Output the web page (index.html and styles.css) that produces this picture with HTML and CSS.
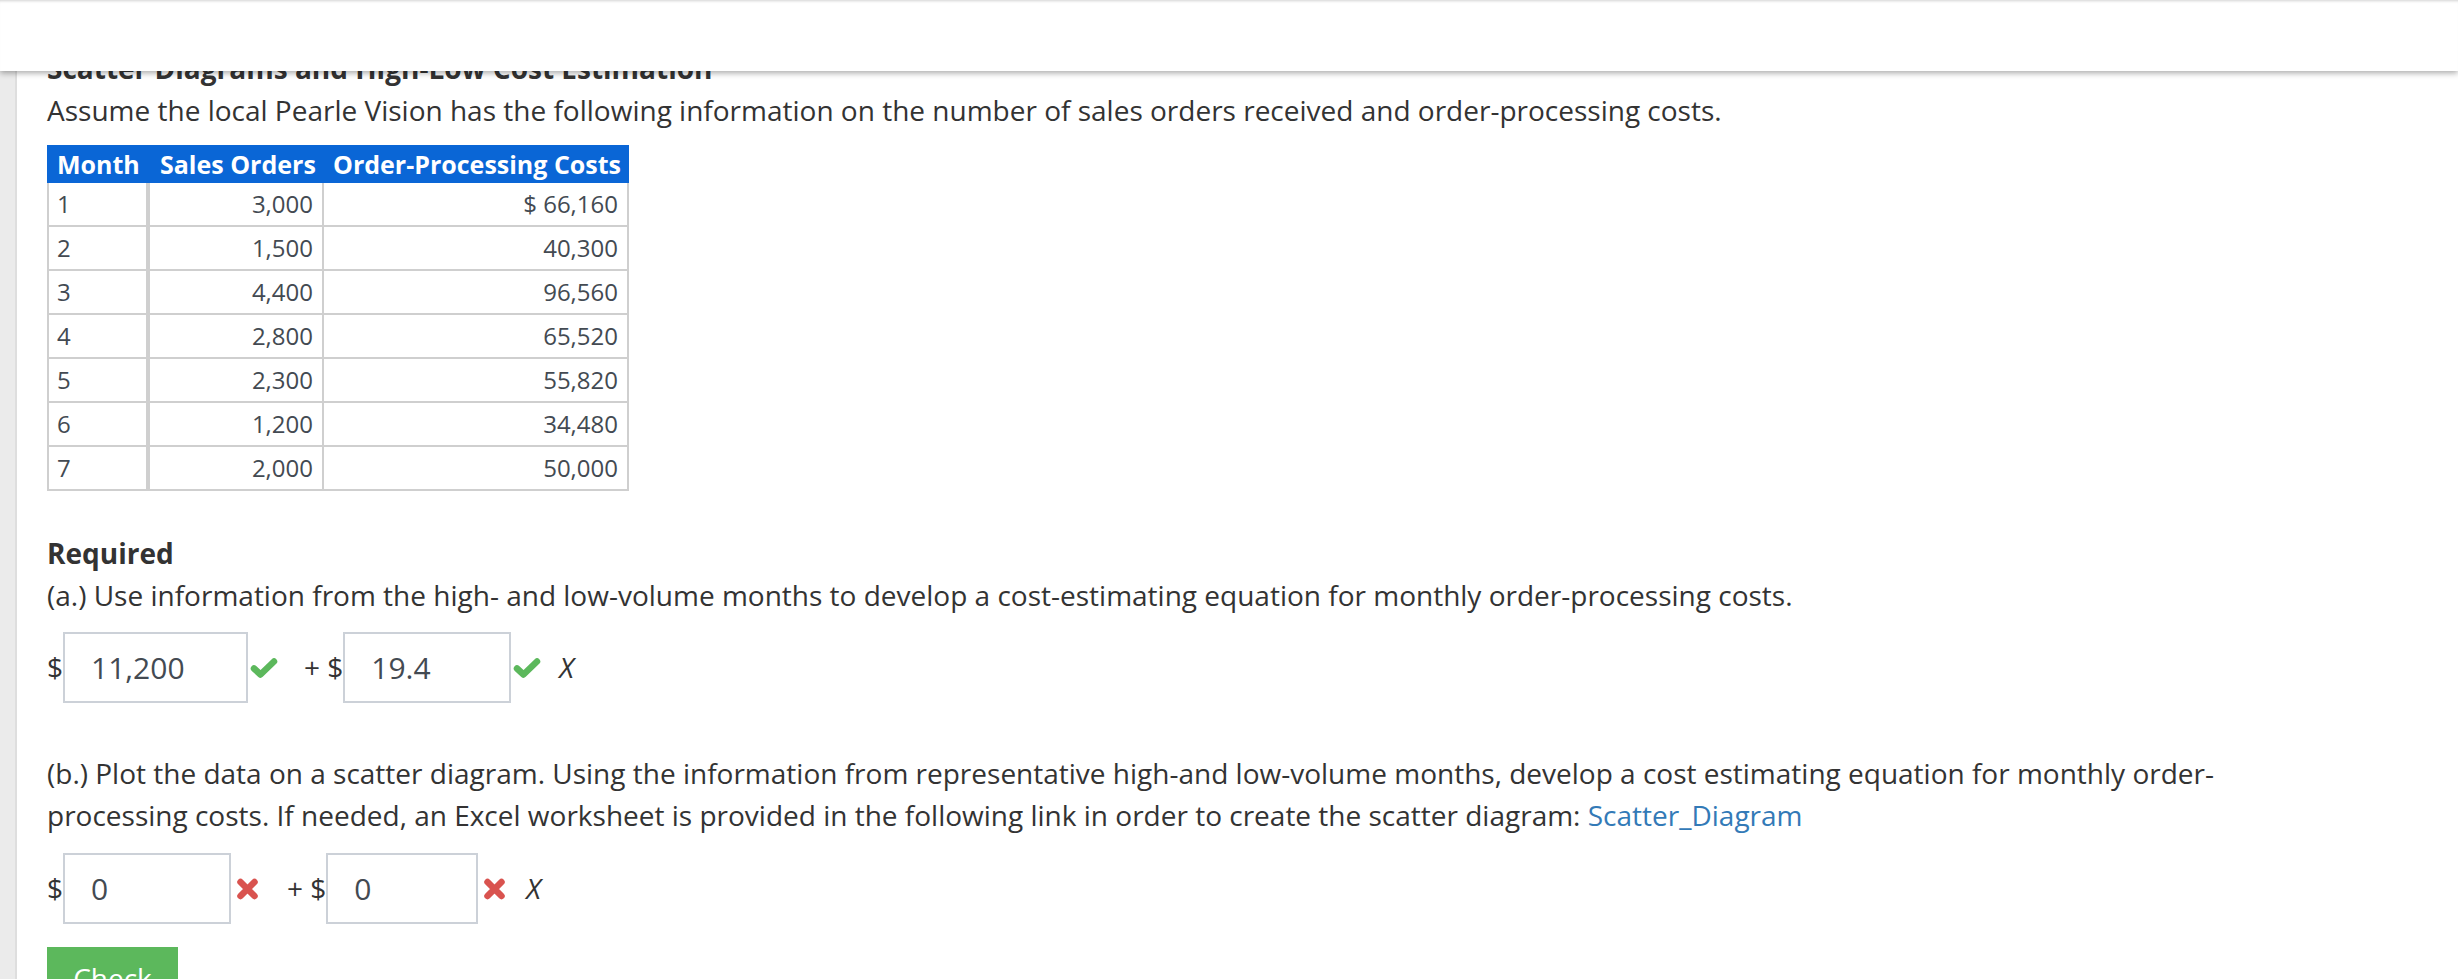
FILE: index.html
```html
<!DOCTYPE html>
<html lang="en">
<head>
<meta charset="utf-8">
<title>Scatter Diagrams and High-Low Cost Estimation</title>
<link rel="stylesheet" href="styles.css">
</head>
<body>
<header class="topbar"></header>
<div class="page">
  <aside class="rail"></aside>
  <main class="content">
    <h2 class="title">Scatter Diagrams and High-Low Cost Estimation</h2>
    <p class="intro">Assume the local Pearle Vision has the following information on the number of sales orders received and order-processing costs.</p>
    <table class="data">
      <colgroup>
        <col class="c1"><col class="c2"><col class="c3">
      </colgroup>
      <thead>
        <tr><th>Month</th><th>Sales Orders</th><th>Order-Processing Costs</th></tr>
      </thead>
      <tbody>
        <tr><td>1</td><td class="num">3,000</td><td class="num">$ 66,160</td></tr>
        <tr><td>2</td><td class="num">1,500</td><td class="num">40,300</td></tr>
        <tr><td>3</td><td class="num">4,400</td><td class="num">96,560</td></tr>
        <tr><td>4</td><td class="num">2,800</td><td class="num">65,520</td></tr>
        <tr><td>5</td><td class="num">2,300</td><td class="num">55,820</td></tr>
        <tr><td>6</td><td class="num">1,200</td><td class="num">34,480</td></tr>
        <tr><td>7</td><td class="num">2,000</td><td class="num">50,000</td></tr>
      </tbody>
    </table>
    <p class="req"><strong>Required</strong><br>(a.) Use information from the high- and low-volume months to develop a cost-estimating equation for monthly order-processing costs.</p>
    <div class="answer">
      <span class="lbl">$</span>
      <input class="box w185" type="text" value="11,200">
      <svg class="ok" viewBox="0 0 28 22" width="28" height="22"><polyline points="4,11.5 10.5,17.5 24,4.5" fill="none" stroke="#5cb85c" stroke-width="6.5" stroke-linecap="round" stroke-linejoin="round"/></svg>
      <span class="lbl plus">+ $</span>
      <input class="box w168" type="text" value="19.4">
      <svg class="ok" viewBox="0 0 28 22" width="28" height="22"><polyline points="4,11.5 10.5,17.5 24,4.5" fill="none" stroke="#5cb85c" stroke-width="6.5" stroke-linecap="round" stroke-linejoin="round"/></svg>
      <span class="var">X</span>
    </div>
    <p class="partb">(b.) Plot the data on a scatter diagram. Using the information from representative high-and low-volume months, develop a cost estimating equation for monthly order-processing costs. If needed, an Excel worksheet is provided in the following link in order to create the scatter diagram: <a href="#">Scatter_Diagram</a></p>
    <div class="answer answer-b">
      <span class="lbl">$</span>
      <input class="box w168" type="text" value="0">
      <svg class="bad" viewBox="0 0 23 22" width="23" height="22"><path d="M4.5 4 L18.5 18 M18.5 4 L4.5 18" fill="none" stroke="#d9534f" stroke-width="6.5" stroke-linecap="round"/></svg>
      <span class="lbl plus2">+ $</span>
      <input class="box w152" type="text" value="0">
      <svg class="bad" viewBox="0 0 23 22" width="23" height="22"><path d="M4.5 4 L18.5 18 M18.5 4 L4.5 18" fill="none" stroke="#d9534f" stroke-width="6.5" stroke-linecap="round"/></svg>
      <span class="var var2">X</span>
    </div>
    <button class="check" type="button">Check</button>
  </main>
</div>
</body>
</html>
```
FILE: styles.css
```css
* { box-sizing: border-box; }
html, body { margin: 0; padding: 0; background: #fff; }
body {
  font-family: "Open Sans", "Liberation Sans", sans-serif;
  font-size: 28px;
  line-height: 42px;
  color: #333;
  overflow: hidden;
  height: 979px;
}
.topbar {
  position: fixed;
  top: 0; left: 0; right: 0;
  height: 71px;
  background: #fff;
  box-shadow: 0 2px 6px rgba(0,0,0,0.35), inset 0 3px 3px -2px rgba(0,0,0,0.18);
  z-index: 10;
}
.page { display: flex; min-height: 979px; }
.rail {
  width: 17px;
  flex: none;
  background: #ebebeb;
  border-right: 2px solid #dedede;
}
.content {
  flex: 1;
  padding: 47px 0 0 30px;
}
.title {
  margin: 0;
  font-size: 28px;
  font-weight: 700;
  line-height: 42px;
  color: #333;
}
.intro { margin: 0 0 14px; }
.data {
  border-collapse: separate;
  border-spacing: 0;
  table-layout: fixed;
  width: 582px;
  font-size: 24px;
}
.data col.c1 { width: 103px; }
.data col.c2 { width: 174px; }
.data col.c3 { width: 305px; }
.data th {
  background: #0a66d6;
  color: #fff;
  font-size: 25px;
  font-weight: 700;
  text-align: left;
  height: 38px;
  line-height: 38px;
  padding: 0 0 0 10px;
  white-space: nowrap;
}
.data th:nth-child(3) { padding-left: 9px; }
.data td {
  height: 44px;
  line-height: 40px;
  padding: 0 9px 0 10px;
  color: #434a52;
  border-right: 2px solid #cfcfcf;
  border-bottom: 2px solid #cfcfcf;
}
.data td:first-child {
  border-left: 2px solid #cfcfcf;
  border-right-width: 4px;
  padding-left: 8px;
}
.data td.num { text-align: right; }
.req { margin: 41px 0 0; }
.req strong { font-weight: 700; }
.answer {
  display: flex;
  align-items: center;
  margin-top: 16px;
  font-size: 28px;
  line-height: 71px;
  color: #333;
}
.answer-b { margin-top: 17px; }
.lbl { margin-right: 0; }
.plus { margin-left: 26px; }
.plus2 { margin-left: 28px; }
.box {
  height: 71px;
  border: 2px solid #ccd1d8;
  border-radius: 0;
  padding: 0 0 0 26px;
  font-family: "Open Sans", "Liberation Sans", sans-serif;
  font-size: 30px;
  color: #434a52;
  background: #fff;
  outline: none;
}
.w185 { width: 185px; }
.w168 { width: 168px; }
.w152 { width: 152px; }
.ok { margin-left: 2px; flex: none; }
.bad { margin-left: 5px; flex: none; }
.var { font-style: italic; margin-left: 18px; }
.var2 { margin-left: 20px; }
.partb { margin: 49px 0 0; max-width: 2233px; }
.partb a { color: #337ab7; text-decoration: none; }
.check {
  display: block;
  margin-top: 23px;
  width: 131px;
  height: 62px;
  border: none;
  border-radius: 0;
  background: #5cb85c;
  color: #fff;
  font-family: "Open Sans", "Liberation Sans", sans-serif;
  font-size: 28px;
  padding: 0;
}
```
